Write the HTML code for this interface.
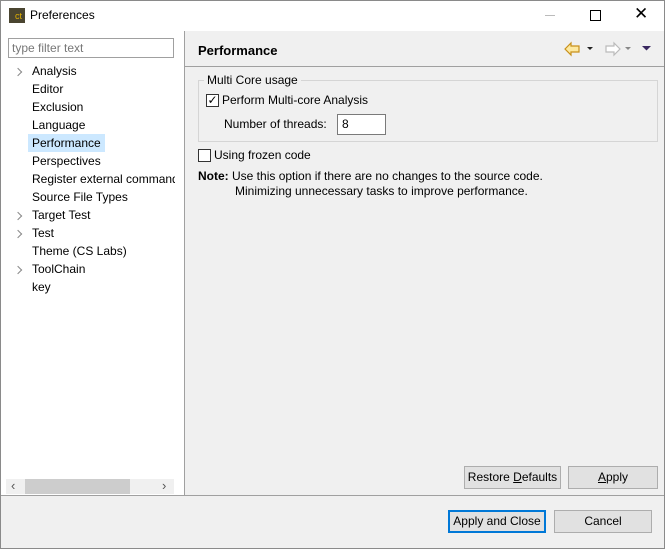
<!DOCTYPE html>
<html><head><style>
*{margin:0;padding:0;box-sizing:border-box}
body{width:665px;height:549px;background:#fff;font-family:"Liberation Sans",sans-serif;font-size:12px;color:#000;position:relative;overflow:hidden}
.a{position:absolute;white-space:nowrap}
.win{position:absolute;left:0;top:0;width:665px;height:549px;border:1px solid #8a8a8a}
.tree div{position:absolute;left:32px;height:18px;line-height:18px;white-space:nowrap}
.chev{position:absolute;left:15px;width:6px;height:6px;border-right:1.3px solid #888;border-top:1.3px solid #888;transform:rotate(45deg)}
.btn{position:absolute;background:#e1e1e1;border:1px solid #adadad;text-align:center;line-height:21px;height:23px;white-space:nowrap}
</style></head><body>
<div class="win"></div>
<!-- title -->
<div class="a" style="left:9px;top:8px;width:16px;height:15px;background:#4a4530"><span style="position:absolute;left:6px;top:3px;font-size:9px;color:#e0b000">ct</span></div>
<div class="a" style="left:30px;top:8px;font-size:12px">Preferences</div>
<div class="a" style="left:545px;top:15px;width:10px;height:1px;background:#bbb"></div>
<div class="a" style="left:590px;top:10px;width:11px;height:11px;border:1px solid #000"></div>
<div class="a" style="left:634px;top:4px;font-size:17px">✕</div>
<!-- left -->
<div class="a" style="left:8px;top:38px;width:166px;height:20px;border:1px solid #a0a0a0;padding-left:3px;line-height:18px;color:#777">type filter text</div>
<div class="tree" style="position:absolute;left:0;top:62px;width:175px;height:240px;overflow:hidden">
<div style="top:0">Analysis</div><div style="top:18px">Editor</div><div style="top:36px">Exclusion</div><div style="top:54px">Language</div>
<div style="top:72px;left:28px;padding:0 4px;background:#cce8ff">Performance</div>
<div style="top:90px">Perspectives</div><div style="top:108px">Register external commands</div><div style="top:126px">Source File Types</div>
<div style="top:144px">Target Test</div><div style="top:162px">Test</div><div style="top:180px">Theme (CS Labs)</div><div style="top:198px">ToolChain</div><div style="top:216px">key</div>
</div>
<div class="chev" style="top:69px"></div><div class="chev" style="top:213px"></div><div class="chev" style="top:231px"></div><div class="chev" style="top:267px"></div>
<div class="a" style="left:6px;top:479px;width:168px;height:15px;background:#f0f0f0"></div>
<div class="a" style="left:25px;top:479px;width:105px;height:15px;background:#cdcdcd"></div>
<div class="a" style="left:11px;top:478px;color:#555;font-size:13px">‹</div>
<div class="a" style="left:162px;top:478px;color:#555;font-size:13px">›</div>
<!-- right -->
<div class="a" style="left:184px;top:31px;width:1px;height:464px;background:#a0a0a0"></div>
<div class="a" style="left:185px;top:31px;width:479px;height:464px;background:#f0f0f0"></div>
<div class="a" style="left:185px;top:66px;width:479px;height:1px;background:#a0a0a0"></div>
<div class="a" style="left:198px;top:43px;font-weight:bold;font-size:13px">Performance</div>
<svg class="a" style="left:563px;top:40px" width="90" height="18">
<path d="M2 9 L8 3 V6 H16 V12 H8 V15 Z" fill="#fde9a0" stroke="#c8901a" stroke-width="1.2"/>
<path d="M24 7 h6 l-3 3z" fill="#222"/>
<path d="M57 9 L51 3 V6 H43 V12 H51 V15 Z" fill="#fff" stroke="#bbb" stroke-width="1.2"/>
<path d="M62 7 h6 l-3 3z" fill="#888"/>
<path d="M79 6 h9 l-4.5 4.5z" fill="#3a2860"/>
</svg>
<div class="a" style="left:198px;top:80px;width:460px;height:62px;border:1px solid #d5d5d5"></div>
<div class="a" style="left:204px;top:73px;padding:0 3px;background:#f0f0f0">Multi Core usage</div>
<div class="a" style="left:206px;top:94px;width:13px;height:13px;border:1px solid #333;background:#fff;font-size:12px;line-height:11px;text-align:center">✓</div>
<div class="a" style="left:222px;top:93px">Perform Multi-core Analysis</div>
<div class="a" style="left:224px;top:117px">Number of threads:</div>
<div class="a" style="left:337px;top:114px;width:49px;height:21px;border:1px solid #7a7a7a;background:#fff;padding-left:4px;line-height:19px">8</div>
<div class="a" style="left:198px;top:149px;width:13px;height:13px;border:1px solid #333;background:#fff"></div>
<div class="a" style="left:214px;top:148px">Using frozen code</div>
<div class="a" style="left:198px;top:169px"><b>Note:</b> Use this option if there are no changes to the source code.</div>
<div class="a" style="left:235px;top:184px">Minimizing unnecessary tasks to improve performance.</div>
<div class="btn" style="left:464px;top:466px;width:97px">Restore <u>D</u>efaults</div>
<div class="btn" style="left:568px;top:466px;width:90px"><u>A</u>pply</div>
<!-- bottom -->
<div class="a" style="left:1px;top:495px;width:663px;height:53px;background:#f0f0f0;border-top:1px solid #a0a0a0"></div>
<div class="btn" style="left:448px;top:510px;width:98px;border:2px solid #0078d7;line-height:19px">Apply and Close</div>
<div class="btn" style="left:554px;top:510px;width:98px">Cancel</div>
</body></html>
